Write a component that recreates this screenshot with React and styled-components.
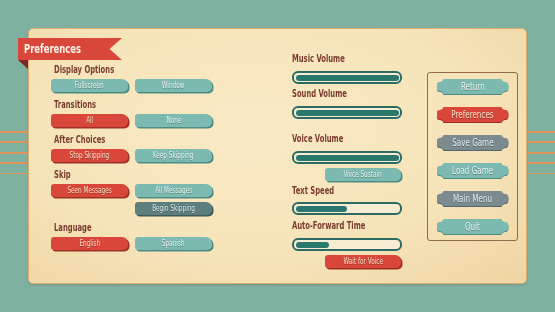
import React from 'react';
import styled, { createGlobalStyle } from 'styled-components';

const FONT = `"DejaVu Sans Condensed", "DejaVu Sans", sans-serif`;

const tones = {
  red: { bg: '#d9473a', shade: '#9e3127', ink: '#f8dfc2' },
  teal: { bg: '#7cbab1', shade: '#4d8c85', ink: '#e9f5ef' },
  slate: { bg: '#5c7f7e', shade: '#3b5959', ink: '#dbe9e6' },
  grey: { bg: '#7b8b90', shade: '#56656a', ink: '#e6ecec' },
};

const Global = createGlobalStyle`
  body {
    margin: 0;
    background: #7fb1a1;
    font-family: ${FONT};
  }
`;

// the game's display face is very narrow, so squeeze the condensed face further
const Squeeze = styled.span`
  display: inline-block;
  vertical-align: top;
  transform: scaleX(${(p) => p.$k || 0.75});
  transform-origin: ${(p) => (p.$left ? 'left' : 'center')} center;
`;

const Page = styled.div`
  width: 555px;
  height: 312px;
  box-sizing: border-box;
  padding: 28px;
  background-color: #7fb1a1;
  background-image: repeating-linear-gradient(
    to bottom,
    transparent 0 8.5px,
    #e0965b 8.5px 10.5px
  );
  background-size: 100% 52px;
  background-position: 0 122px;
  background-repeat: no-repeat;
`;

const Panel = styled.div`
  position: relative;
  height: 256px;
  box-sizing: border-box;
  padding-left: 22px;
  border: 1.5px solid #ddb06f;
  border-radius: 5px;
  background: radial-gradient(ellipse at 45% 40%, #f9eac6 0%, #f6e3b8 60%, #eed5a2 100%);
  box-shadow: 0 1px 2px rgba(80, 60, 30, 0.25);
  display: grid;
  grid-template-columns: 160px 81px 110px 25px 91px;
  align-items: start;
`;

const Ribbon = styled.div`
  position: absolute;
  left: -11px;
  top: 9px;
  width: 104px;
  height: 22px;
  &::before {
    content: '';
    position: absolute;
    inset: 0;
    background: #d9473a;
    clip-path: polygon(0 0, 100% 0, 88% 50%, 100% 100%, 0 100%);
  }
  &::after {
    content: '';
    position: absolute;
    left: 0;
    top: 22px;
    width: 10px;
    height: 9px;
    background: #7e2a22;
    clip-path: polygon(0 0, 100% 0, 100% 100%);
  }
`;

const RibbonText = styled.div`
  position: relative;
  padding-left: 6px;
  height: 22px;
  line-height: 22px;
  font-size: 13px;
  font-weight: bold;
  color: #fff4ea;
  white-space: nowrap;
`;

const LeftCol = styled.div`
  grid-column: 1;
  padding-top: 36px;
  display: flex;
  flex-direction: column;
  gap: 8px;
`;

const Section = styled.div`
  display: flex;
  flex-direction: column;
  gap: 2px;
`;

const Label = styled.div`
  height: 12px;
  font-size: 10.5px;
  line-height: 9px;
  font-weight: bold;
  color: #7a3b30;
  margin-left: ${(p) => (p.$flush ? 0 : 3)}px;
  margin-top: ${(p) => p.$top || 0}px;
  white-space: nowrap;
`;

const Row = styled.div`
  display: grid;
  grid-template-columns: 77px 77px;
  column-gap: 7px;
  margin-top: ${(p) => p.$top || 0}px;
`;

const Opt = styled.div`
  grid-column: ${(p) => p.$col || 'auto'};
  width: ${(p) => p.$w || 77}px;
  height: 13px;
  box-sizing: border-box;
  border-radius: 3px 6px 5px 3px;
  background: ${(p) => tones[p.$tone].bg};
  box-shadow: 1.5px 1.5px 0 ${(p) => tones[p.$tone].shade};
  color: ${(p) => tones[p.$tone].ink};
  font-size: 8.5px;
  line-height: 13px;
  text-align: center;
  text-shadow: 0 0.5px 0 rgba(0, 0, 0, 0.3);
  white-space: nowrap;
  align-self: ${(p) => (p.$right ? 'flex-end' : 'auto')};
  margin-top: ${(p) => p.$top || 0}px;
  margin-right: ${(p) => (p.$right ? 1 : 0)}px;
`;

const MidCol = styled.div`
  grid-column: 3;
  padding-top: 25px;
  display: flex;
  flex-direction: column;
`;

const Track = styled.div`
  width: 110px;
  height: 13px;
  box-sizing: border-box;
  border: 2px solid #2c6b63;
  border-radius: 6px;
  background: #f7edd2;
  padding: 1.5px;
  margin-top: ${(p) => p.$top || 0}px;
`;

const Fill = styled.div`
  height: 100%;
  background: #2a776d;
  border-radius: 3px;
`;

const Menu = styled.div`
  grid-column: 5;
  margin-top: 43px;
  height: 169px;
  box-sizing: border-box;
  border: 1px solid #8e6c4c;
  border-radius: 3px;
  padding-top: 6px;
  display: flex;
  flex-direction: column;
  align-items: center;
  gap: 13px;
`;

const PlaqueWrap = styled.div`
  filter: drop-shadow(0.5px 1.5px 0 ${(p) => tones[p.$tone].shade});
`;

const Plaque = styled.div`
  width: 72px;
  height: 15px;
  background: ${(p) => tones[p.$tone].bg};
  clip-path: path('M7,0 H65 Q66,3 69,3 Q72,3 72,7.5 Q72,12 69,12 Q66,12 65,15 H7 Q6,12 3,12 Q0,12 0,7.5 Q0,3 3,3 Q6,3 7,0 Z');
  color: ${(p) => tones[p.$tone].ink};
  font-size: 10px;
  line-height: 15px;
  text-align: center;
  white-space: nowrap;
  text-shadow: 0 0.5px 0 rgba(0, 0, 0, 0.3);
`;

const sliders = [
  { label: 'Music Volume', value: 1, labelTop: 0, barTop: 5 },
  { label: 'Sound Volume', value: 1, labelTop: 5, barTop: 5 },
  { label: 'Voice Volume', value: 1, labelTop: 15, barTop: 5 },
];

const menu = [
  ['Return', 'teal'],
  ['Preferences', 'red'],
  ['Save Game', 'grey'],
  ['Load Game', 'teal'],
  ['Main Menu', 'grey'],
  ['Quit', 'teal'],
];

function Bar({ value, top }) {
  return (
    <Track $top={top}>
      <Fill style={{ width: `${value * 100}%` }} />
    </Track>
  );
}

function Heading({ children, ...rest }) {
  return (
    <Label {...rest}>
      <Squeeze $left $k={0.72}>{children}</Squeeze>
    </Label>
  );
}

function Choice({ children, ...rest }) {
  return (
    <Opt {...rest}>
      <Squeeze $k={0.75}>{children}</Squeeze>
    </Opt>
  );
}

export default function App() {
  return (
    <Page>
      <Global />
      <Panel>
        <Ribbon>
          <RibbonText>
            <Squeeze $left $k={0.72}>Preferences</Squeeze>
          </RibbonText>
        </Ribbon>

        <LeftCol>
          <Section>
            <Heading>Display Options</Heading>
            <Row>
              <Choice $tone="teal">Fullscreen</Choice>
              <Choice $tone="teal">Window</Choice>
            </Row>
          </Section>
          <Section>
            <Heading>Transitions</Heading>
            <Row>
              <Choice $tone="red">All</Choice>
              <Choice $tone="teal">None</Choice>
            </Row>
          </Section>
          <Section>
            <Heading>After Choices</Heading>
            <Row>
              <Choice $tone="red">Stop Skipping</Choice>
              <Choice $tone="teal">Keep Skipping</Choice>
            </Row>
          </Section>
          <Section>
            <Heading>Skip</Heading>
            <Row>
              <Choice $tone="red">Seen Messages</Choice>
              <Choice $tone="teal">All Messages</Choice>
            </Row>
            <Row $top={3}>
              <Choice $tone="slate" $col={2}>Begin Skipping</Choice>
            </Row>
          </Section>
          <Section>
            <Heading>Language</Heading>
            <Row>
              <Choice $tone="red">English</Choice>
              <Choice $tone="teal">Spanish</Choice>
            </Row>
          </Section>
        </LeftCol>

        <MidCol>
          {sliders.map((s) => (
            <React.Fragment key={s.label}>
              <Heading $flush $top={s.labelTop}>{s.label}</Heading>
              <Bar value={s.value} top={s.barTop} />
            </React.Fragment>
          ))}
          <Choice $tone="teal" $w={76} $right $top={4}>Voice Sustain</Choice>
          <Heading $flush $top={5}>Text Speed</Heading>
          <Bar value={0.5} top={4} />
          <Heading $flush $top={6}>Auto-Forward Time</Heading>
          <Bar value={0.33} top={5} />
          <Choice $tone="red" $w={76} $right $top={4}>Wait for Voice</Choice>
        </MidCol>

        <Menu>
          {menu.map(([text, tone]) => (
            <PlaqueWrap key={text} $tone={tone}>
              <Plaque $tone={tone}>
                <Squeeze $k={0.8}>{text}</Squeeze>
              </Plaque>
            </PlaqueWrap>
          ))}
        </Menu>
      </Panel>
    </Page>
  );
}
